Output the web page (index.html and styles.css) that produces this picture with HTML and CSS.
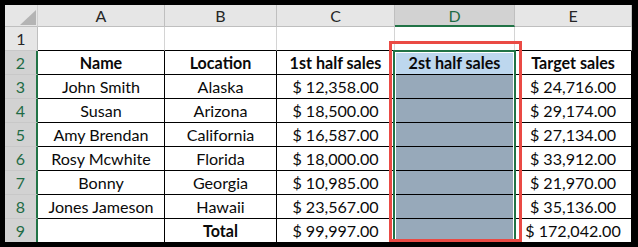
FILE: index.html
```html
<!DOCTYPE html>
<html>
<head>
<meta charset="utf-8">
<link rel="stylesheet" href="styles.css">
</head>
<body>
<div class="frame">
  <div class="sheet">
    <div class="ch corner"><span class="tri"></span></div>
    <div class="ch">A</div>
    <div class="ch">B</div>
    <div class="ch">C</div>
    <div class="ch chsel">D</div>
    <div class="ch">E</div>

    <div class="rh">1</div>
    <div class="c r1"></div><div class="c r1"></div><div class="c r1"></div><div class="c r1"></div><div class="c r1"></div>

    <div class="rh sel">2</div>
    <div class="c d b">Name</div><div class="c d b">Location</div><div class="c d b">1st half sales</div><div class="c d b hd">2st half sales</div><div class="c d b">Target sales</div>

    <div class="rh sel">3</div>
    <div class="c d">John Smith</div><div class="c d">Alaska</div><div class="c d">$ 12,358.00</div><div class="c d gd"></div><div class="c d">$ 24,716.00</div>

    <div class="rh sel">4</div>
    <div class="c d">Susan</div><div class="c d">Arizona</div><div class="c d">$ 18,500.00</div><div class="c d gd"></div><div class="c d">$ 29,174.00</div>

    <div class="rh sel">5</div>
    <div class="c d">Amy Brendan</div><div class="c d">California</div><div class="c d">$ 16,587.00</div><div class="c d gd"></div><div class="c d">$ 27,134.00</div>

    <div class="rh sel">6</div>
    <div class="c d">Rosy Mcwhite</div><div class="c d">Florida</div><div class="c d">$ 18,000.00</div><div class="c d gd"></div><div class="c d">$ 33,912.00</div>

    <div class="rh sel">7</div>
    <div class="c d">Bonny</div><div class="c d">Georgia</div><div class="c d">$ 10,985.00</div><div class="c d gd"></div><div class="c d">$ 21,970.00</div>

    <div class="rh sel">8</div>
    <div class="c d">Jones Jameson</div><div class="c d">Hawaii</div><div class="c d">$ 23,567.00</div><div class="c d gd"></div><div class="c d">$ 35,136.00</div>

    <div class="rh sel">9</div>
    <div class="c d"></div><div class="c d b">Total</div><div class="c d">$ 99,997.00</div><div class="c d gd"></div><div class="c d">$ 172,042.00</div>
  </div>
  <div class="selection"></div>
  <div class="highlight"></div>
</div>
</body>
</html>
```
FILE: styles.css
```css
html, body {
  margin: 0;
  padding: 0;
}
body {
  background: #000;
  width: 638px;
  height: 247px;
  overflow: hidden;
  font-family: Lato, "Open Sans", sans-serif;
  font-size: 16px;
  color: #000;
}
.frame {
  position: relative;
  margin: 5px 0 0 5px;
  width: 627px;
  height: 237px;
  overflow: hidden;
  background: #fff;
}
.sheet {
  display: grid;
  grid-template-columns: 33px 127px 112px 118px 120px 117px;
  grid-template-rows: 22px repeat(9, 24px);
}
.sheet > div {
  box-sizing: border-box;
  text-align: center;
  white-space: nowrap;
  overflow: hidden;
}
.ch {
  background: #e6e6e6;
  border-right: 1px solid #bfbfbf;
  border-bottom: 1px solid #bfbfbf;
  color: #262626;
  line-height: 21px;
}
.corner {
  display: flex;
  justify-content: flex-end;
  align-items: flex-end;
  padding: 0 1px 1px 0;
  border-right-color: #d0d0d0;
}
.tri {
  width: 16px;
  height: 15px;
  background: #b4b4b4;
  clip-path: polygon(100% 0, 100% 100%, 0 100%);
}
.chsel {
  background: #d2d2d2;
  border-bottom: 2px solid #217346;
  color: #1e6b45;
}
.rh {
  background: #e6e6e6;
  border-right: 1px solid #bfbfbf;
  border-bottom: 1px solid #c8c8c8;
  color: #262626;
  line-height: 23px;
}
.rh.sel {
  background: #d2d2d2;
  border-right: 2px solid #217346;
  color: #1e6b45;
}
.c {
  line-height: 23px;
  font-size: 16.1px;
  color: #0a0a0a;
}
.r1 {
  border-right: 1px solid #d4d4d4;
  border-bottom: 1px solid #000;
}
.d {
  border-right: 1px solid #000;
  border-bottom: 1px solid #000;
}
.b {
  font-weight: bold;
}
.hd {
  background: #bdd7ee;
}
.gd {
  background: #97a9ba;
}
.selection {
  position: absolute;
  left: 388px;
  top: 45px;
  width: 123px;
  height: 200px;
  box-sizing: border-box;
  border: 2px solid #217346;
  box-shadow: inset 0 0 0 1px #fff;
  pointer-events: none;
}
.highlight {
  position: absolute;
  left: 384px;
  top: 36px;
  width: 133px;
  height: 201px;
  box-sizing: border-box;
  border: 3px solid #ea4a44;
  pointer-events: none;
}
```
